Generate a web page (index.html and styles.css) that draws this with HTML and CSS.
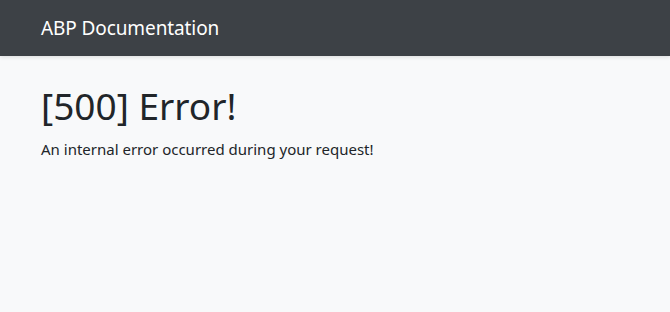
FILE: index.html
```html
<!DOCTYPE html>
<html lang="en">
<head>
<meta charset="utf-8">
<title>ABP Documentation</title>
<link rel="stylesheet" href="styles.css">
</head>
<body>
<header class="navbar">
  <a class="brand" href="#">ABP Documentation</a>
</header>
<main class="content">
  <h1 class="title">[500] Error!</h1>
  <p class="message">An internal error occurred during your request!</p>
</main>
</body>
</html>
```

FILE: styles.css
```css
* { box-sizing: border-box; }
html, body { margin: 0; padding: 0; }
body {
  background: #f8f9fa;
  font-family: "Noto Sans", "Open Sans", sans-serif;
  color: #212529;
  height: 312px;
}
.navbar {
  height: 56px;
  background: #3d4146;
  display: flex;
  align-items: center;
  padding: 0 41px;
  box-shadow: 0 1px 4px rgba(0,0,0,0.12);
}
.brand {
  color: #ffffff;
  font-size: 19px;
  text-decoration: none;
  letter-spacing: -0.1px;
}
.content {
  padding: 26px 41px;
}
.title {
  margin: 0 0 8px;
  font-size: 37px;
  font-weight: 400;
  line-height: 48px;
  color: #212529;
}
.message {
  margin: 0;
  font-size: 15px;
  line-height: 22px;
}
```
